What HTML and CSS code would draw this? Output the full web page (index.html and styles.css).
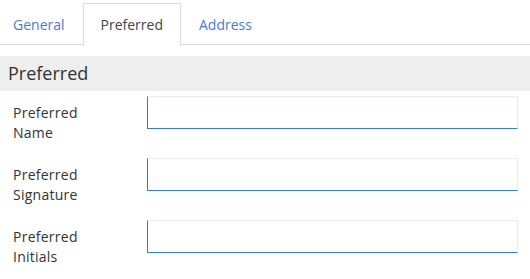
FILE: index.html
```html
<!DOCTYPE html>
<html>
<head>
<meta charset="utf-8">
<link rel="stylesheet" href="styles.css">
</head>
<body>
<div class="tabs">
  <div class="tab first">General</div>
  <div class="tab active">Preferred</div>
  <div class="tab">Address</div>
</div>
<div class="section-header">Preferred</div>
<div class="form">
  <div class="row">
    <label class="label">Preferred<br>Name</label>
    <input class="field" type="text">
  </div>
  <div class="row">
    <label class="label">Preferred<br>Signature</label>
    <input class="field" type="text">
  </div>
  <div class="row">
    <label class="label">Preferred<br>Initials</label>
    <input class="field" type="text">
  </div>
</div>
</body>
</html>
```
FILE: styles.css
```css
html, body {
  margin: 0;
  padding: 0;
  background: #fff;
}
body {
  font-family: "Open Sans", "DejaVu Sans", sans-serif;
  color: #333;
}
.tabs {
  display: flex;
  padding-top: 3px;
  height: 41px;
  border-bottom: 1px solid #dcdcdc;
}
.tab {
  padding: 0 17px;
  font-size: 14px;
  line-height: 41px;
  color: #4a7bd2;
  border: 1px solid transparent;
  border-bottom: none;
}
.tab.first {
  padding-left: 12px;
  padding-right: 17px;
}
.tab.active {
  color: #444;
  border-color: #dcdcdc;
  background: #fff;
  margin-bottom: -1px;
  height: 42px;
}
.section-header {
  margin-top: 11px;
  height: 35px;
  line-height: 35px;
  background: #eeeeee;
  padding-left: 8px;
  font-size: 18px;
  color: #333;
}
.form {
  padding-top: 5px;
  padding-right: 12px;
  display: flex;
  flex-direction: column;
}
.row {
  display: grid;
  grid-template-columns: 147px 1fr;
  align-items: start;
  height: 62px;
}
.label {
  padding-left: 13px;
  padding-top: 7px;
  font-size: 14px;
  line-height: 20px;
  letter-spacing: 0.25px;
  color: #333;
}
.field {
  box-sizing: border-box;
  height: 33px;
  width: 100%;
  margin: 0;
  border: 1px solid #e6ebfa;
  border-left: 1px solid #3a7bd5;
  border-bottom: 1px solid #3a7bd5;
  background: #fff;
  outline: none;
  padding: 0 8px;
}
```
